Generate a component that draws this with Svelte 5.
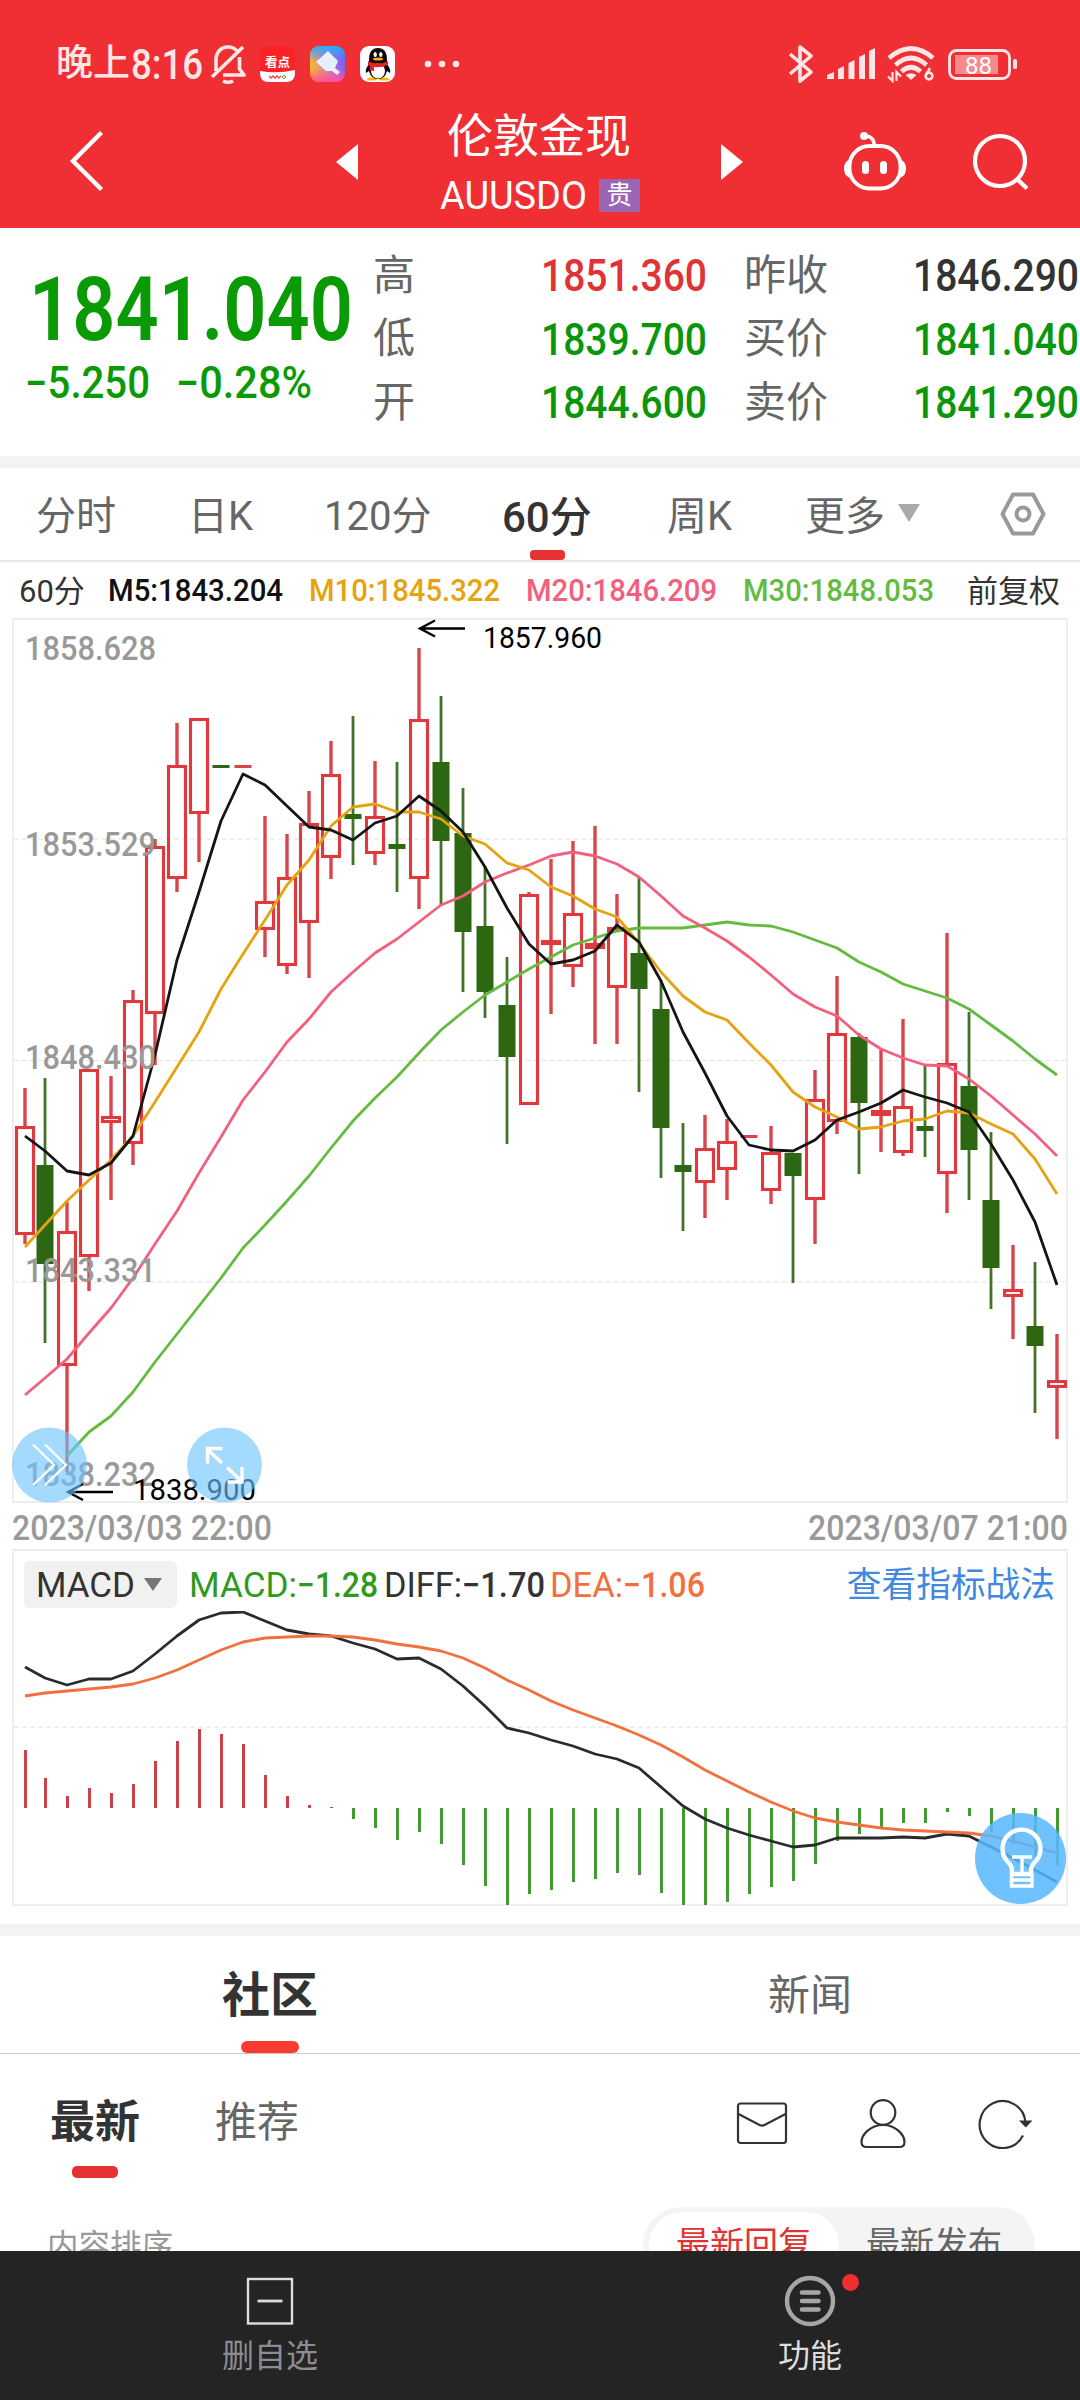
<script lang="ts">
	type Candle = [kind: 'r' | 'g', high: number, top: number, bottom: number, low: number];

	const quotes = [
		{ label: '高', value: '1851.360', tone: 'up', label2: '昨收', value2: '1846.290', tone2: 'flat' },
		{ label: '低', value: '1839.700', tone: 'down', label2: '买价', value2: '1841.040', tone2: 'down' },
		{ label: '开', value: '1844.600', tone: 'down', label2: '卖价', value2: '1841.290', tone2: 'down' }
	];

	const periods = ['分时', '日K', '120分', '60分', '周K'];
	let period = $state('60分');

	const averages = [
		{ text: 'M5:1843.204', width: 175, tone: 'm5' },
		{ text: 'M10:1845.322', width: 191, tone: 'm10' },
		{ text: 'M20:1846.209', width: 191, tone: 'm20' },
		{ text: 'M30:1848.053', width: 191, tone: 'm30' }
	];

	const axis = [
		{ text: '1858.628', y: 660 },
		{ text: '1853.529', y: 856 },
		{ text: '1848.430', y: 1069 },
		{ text: '1843.331', y: 1282 },
		{ text: '1838.232', y: 1486 }
	];

	const candles: Candle[] = [
		['r', 1088, 1126, 1235, 1244], ['g', 1078, 1165, 1264, 1343], ['r', 1202, 1231, 1366, 1472],
		['r', 1069, 1069, 1257, 1291], ['r', 1076, 1116, 1123, 1200], ['r', 990, 1000, 1144, 1165],
		['r', 839, 846, 1014, 1065], ['r', 723, 765, 879, 892], ['r', 718, 718, 814, 862],
		['g', 765, 765, 768, 768], ['r', 765, 765, 768, 768], ['r', 816, 901, 930, 957],
		['r', 834, 877, 966, 974], ['r', 791, 823, 923, 978], ['r', 741, 774, 858, 879],
		['g', 716, 814, 819, 865], ['r', 761, 816, 854, 865], ['g', 762, 844, 849, 892],
		['r', 648, 719, 879, 909], ['g', 696, 762, 841, 905], ['g', 788, 833, 932, 992],
		['g', 866, 926, 992, 1018], ['g', 957, 1005, 1057, 1144], ['r', 892, 894, 1105, 1105],
		['r', 859, 940, 945, 1014], ['r', 841, 913, 967, 987], ['r', 826, 943, 949, 1044],
		['r', 894, 927, 988, 1044], ['g', 877, 953, 989, 1092], ['g', 980, 1009, 1128, 1178],
		['g', 1123, 1165, 1172, 1231], ['r', 1115, 1148, 1183, 1218], ['r', 1119, 1141, 1170, 1200],
		['r', 1135, 1135, 1138, 1138], ['r', 1126, 1152, 1191, 1204], ['g', 1153, 1153, 1176, 1283],
		['r', 1070, 1099, 1200, 1244], ['r', 976, 1033, 1122, 1134], ['g', 1033, 1037, 1103, 1174],
		['r', 1050, 1110, 1116, 1152], ['r', 1019, 1106, 1153, 1156], ['g', 1065, 1126, 1131, 1157],
		['r', 933, 1063, 1174, 1213], ['g', 1012, 1086, 1150, 1200], ['g', 1132, 1200, 1268, 1309],
		['r', 1245, 1289, 1297, 1339], ['g', 1262, 1326, 1346, 1413], ['r', 1334, 1380, 1388, 1439]
	];

	const m5 = [
		1136, 1151, 1171, 1175, 1163, 1136, 1055, 960, 892, 821, 774, 785, 806, 827, 830, 840, 823, 816, 796, 811,
		832, 867, 908, 944, 964, 960, 951, 925, 942, 981, 1032, 1073, 1116, 1145, 1150, 1151, 1140, 1120, 1112, 1103,
		1090, 1097, 1103, 1112, 1144, 1180, 1222, 1285
	];
	const m10 = [
		1247, 1225, 1201, 1180, 1160, 1136, 1102, 1067, 1032, 989, 954, 920, 885, 860, 826, 807, 804, 812, 812, 819,
		836, 844, 863, 870, 887, 896, 909, 917, 943, 972, 996, 1012, 1020, 1043, 1065, 1092, 1107, 1117, 1129, 1127,
		1121, 1119, 1111, 1113, 1124, 1134, 1159, 1194
	];
	const m20 = [
		1395, 1378, 1359, 1333, 1308, 1278, 1244, 1211, 1173, 1137, 1100, 1072, 1042, 1019, 992, 972, 953, 939, 922,
		905, 896, 882, 873, 865, 856, 852, 856, 864, 877, 896, 916, 928, 941, 957, 975, 994, 1007, 1016, 1035, 1049,
		1058, 1065, 1066, 1079, 1096, 1115, 1134, 1156
	];
	const m30 = [
		1456, 1432, 1416, 1392, 1362, 1334, 1306, 1278, 1248, 1225, 1201, 1176, 1148, 1121, 1098, 1077, 1053, 1030,
		1012, 995, 982, 969, 957, 945, 938, 931, 928, 928, 928, 925, 922, 925, 926, 932, 940, 948, 962, 972, 984, 991,
		998, 1009, 1025, 1041, 1059, 1075
	];

	const bars = [
		1750, 1778, 1796, 1788, 1793, 1784, 1761, 1741, 1729, 1734, 1744, 1775, 1796, 1805, 1807, 1819, 1828, 1840,
		1832, 1844, 1865, 1886, 1905, 1894, 1890, 1882, 1879, 1873, 1875, 1893, 1905, 1905, 1902, 1894, 1887, 1881,
		1864, 1841, 1834, 1827, 1823, 1823, 1812, 1816, 1832, 1844, 1857, 1865
	];
	const diff = [
		1667, 1678, 1685, 1679, 1679, 1671, 1654, 1636, 1620, 1613, 1612, 1621, 1630, 1634, 1636, 1643, 1649, 1659,
		1658, 1669, 1686, 1706, 1728, 1733, 1740, 1746, 1754, 1759, 1768, 1787, 1806, 1819, 1828, 1835, 1841, 1847,
		1845, 1838, 1838, 1838, 1837, 1838, 1834, 1836, 1847, 1858, 1870, 1882
	];
	const dea = [
		1696, 1693, 1691, 1689, 1687, 1684, 1678, 1670, 1660, 1650, 1642, 1638, 1637, 1636, 1636, 1637, 1640, 1644,
		1647, 1651, 1658, 1668, 1680, 1690, 1701, 1710, 1718, 1726, 1735, 1745, 1757, 1770, 1781, 1792, 1802, 1811,
		1818, 1822, 1825, 1828, 1830, 1831, 1832, 1833, 1836, 1841, 1847, 1853
	];

	const zero = 1808;

	// the first two slots sit slightly off the 22px rhythm
	const slot = (i: number) => (i === 0 ? 25 : i === 1 ? 45 : 23 + i * 22);
	const line = (ys: number[], from = 0) => ys.map((y, i) => `${slot(i + from)},${y}`).join(' ');
</script>

<!-- condensed figures: cap is the cap height in px -->
{#snippet fig(text: string, width: number, cap: number)}
	<svg class="fig" {width} height={cap} viewBox="0 0 {width} {cap}">
		<text x="0" y={cap} font-size={cap / 0.711} textLength={width} lengthAdjust="spacingAndGlyphs">{text}</text>
	</svg>
{/snippet}

<div class="screen">
	<header>
		<div class="status">
			<div class="status-left">
				<span class="clock">晚上</span>
				<span class="clock-time">{@render fig('8:16', 72, 30)}</span>
				<svg class="bell" width="36" height="40" viewBox="0 0 36 40" fill="none" stroke="#ffe6e6" stroke-width="3.6">
					<path d="M6 27V16C6 8 11 3 18 3c4 0 7 1.500 9 4M29.500 13v12l4.500 6H13M2 33 33 3" stroke-linejoin="round" />
					<path d="M13 37q5 2.500 10 0" />
				</svg>
				<svg class="app" width="35" height="36" viewBox="0 0 35 36">
					<rect width="35" height="36" rx="9" fill="#fa2226" />
					<path d="M0 25q17 3 35-1v3q0 9-9 9H9q-9 0-9-9z" fill="#fff" />
					<text x="5" y="21" font-size="12.500" font-weight="700" fill="#fff">看点</text>
					<path d="M9 30l2 2 2-2 2 2 2-2 2 2 2-2" fill="none" stroke="#e44" stroke-width="1.400" />
					<circle cx="24" cy="31" r="1.500" fill="none" stroke="#693" />
				</svg>
				<svg class="app" width="35" height="36" viewBox="0 0 35 36">
					<defs>
						<linearGradient id="paint" x1="0" y1="0.700" x2="1" y2="0.300">
							<stop offset="0" stop-color="#ffc21c" />
							<stop offset="0.250" stop-color="#e8a06a" />
							<stop offset="0.600" stop-color="#b06fe0" />
							<stop offset="1" stop-color="#6a5cff" />
						</linearGradient>
						<linearGradient id="sky" x1="0" y1="0" x2="0" y2="1">
							<stop offset="0" stop-color="#1db4f5" />
							<stop offset="0.450" stop-color="#4a9df5" stop-opacity="0" />
							<stop offset="0.600" stop-color="#ff4f9a" stop-opacity="0" />
							<stop offset="1" stop-color="#ff4f9a" />
						</linearGradient>
					</defs>
					<rect width="35" height="36" rx="9" fill="url(#paint)" />
					<rect width="35" height="36" rx="9" fill="url(#sky)" />
					<path d="M18 5 28 15l-3 7 5 4-3 3-5-4-6 0L6 16z" fill="#e8f0ff" />
				</svg>
				<svg class="app" width="35" height="36" viewBox="0 0 35 36">
					<rect width="35" height="36" rx="9" fill="#fff" />
					<ellipse cx="12" cy="33" rx="5" ry="1.600" fill="#f7b500" />
					<ellipse cx="24" cy="33" rx="5" ry="1.600" fill="#f7b500" />
					<path d="M9 14Q9 2 18 2t9 12v4q4 5 3 9l-3-2q-2 8-9 8t-9-8l-3 2q-1-4 3-9z" fill="#090909" />
					<ellipse cx="18" cy="25" rx="7" ry="7.500" fill="#fff" />
					<path d="M8 15q10 5 20 0v4q-7 3-14 2v4l-4-.5V20l-2-1z" fill="#e8202a" />
					<ellipse cx="15.200" cy="8.500" rx="1.700" ry="2.500" fill="#fff" />
					<ellipse cx="20.800" cy="8.500" rx="1.700" ry="2.500" fill="#fff" />
					<ellipse cx="18" cy="13" rx="5" ry="1.500" fill="#f7b500" />
				</svg>
				<svg class="dots" width="36" height="8" viewBox="0 0 36 8" fill="#ffe6e6">
					<circle cx="4" cy="4" r="3.300" /><circle cx="18" cy="4" r="3.300" /><circle cx="32" cy="4" r="3.300" />
				</svg>
			</div>
			<div class="status-right">
				<svg width="26" height="40" viewBox="0 0 26 40" fill="none" stroke="#ffe6e6" stroke-width="3.600" stroke-linejoin="round">
					<path d="M2 10l21 18-11 9V3l11 9L2 30" />
				</svg>
				<svg class="signal" width="48" height="32" viewBox="0 0 48 32" fill="#ffe6e6">
					<path d="M0 31v-4l7-3v7zM11 31V21l6-3v13zM21.500 31V15l6-3v19zM32 31V9l6-3v25zM42 31V3l6-3v31z" />
				</svg>
				<svg class="wifi" width="48" height="38" viewBox="0 0 48 38" fill="none" stroke="#ffe6e6" stroke-width="4.6">
					<path d="M2 13Q24-6 46 13M8.500 20Q24 6 39.500 20M14.500 26.500q9.500-8.500 19 0" />
					<path d="M18.500 30q5.500-3.500 11 0L24 35z" fill="#ffe6e6" stroke="none" />
					<path d="M5.500 27v9L1 31.500M9.500 36v-9l4.500 4.500" stroke-width="2.200" />
					<circle cx="42" cy="31" r="3.400" stroke-width="2.600" />
					<path d="M39 30l4-7" stroke-width="2.600" />
				</svg>
				<svg class="battery" width="70" height="31" viewBox="0 0 70 31">
					<rect x="1.500" y="1.500" width="60" height="28" rx="7" fill="none" stroke="#ffe6e6" stroke-width="2.800" />
					<rect x="7" y="6" width="43" height="19" fill="#f68a8c" />
					<rect x="65" y="10" width="4" height="10" rx="1.500" fill="#ffe6e6" />
					<text x="17" y="24.500" font-size="24" textLength="27" lengthAdjust="spacingAndGlyphs" fill="#fff">88</text>
				</svg>
			</div>
		</div>

		<div class="nav">
			<svg class="back" width="36" height="62" viewBox="0 0 36 62" fill="none" stroke="#fff" stroke-width="4.400">
				<path d="M32.500 2.500 4 31l28.500 28.500" />
			</svg>
			<svg class="prev" width="22" height="36" viewBox="0 0 22 36" fill="#fff"><path d="M22 0v36L0 18z" /></svg>
			<div class="title">
				<div class="name">伦敦金现</div>
				<div class="code">
					{@render fig('AUUSDO', 147, 28)}
					<span class="badge">贵</span>
				</div>
			</div>
			<svg class="next" width="22" height="36" viewBox="0 0 22 36" fill="#fff"><path d="M0 0v36l22-18z" /></svg>
			<svg class="robot" width="64" height="62" viewBox="0 0 64 62" fill="none" stroke="#fff" stroke-width="3.800">
				<rect x="6.500" y="16" width="51" height="42.500" rx="20" />
				<path d="M5.500 31q-3.500 2-3.500 7.500t3.500 7.500zM58.500 31q3.500 2 3.500 7.500t-3.500 7.500z" fill="#fff" stroke-width="2" />
				<path d="M22 6q9 0 9.500 10" stroke-width="3.400" />
				<circle cx="21" cy="6" r="4" fill="#fff" stroke="none" />
				<path d="M22.500 34.500v6M40.500 34.500v6" stroke-width="7" stroke-linecap="round" />
			</svg>
			<svg class="search" width="58" height="58" viewBox="0 0 58 58" fill="none" stroke="#fff" stroke-width="4.200">
				<circle cx="28" cy="28" r="25" />
				<path d="M44.500 45.500 55 55.500" />
			</svg>
		</div>
	</header>

	<section class="quote">
		<div class="last">
			<div class="price">{@render fig('1841.040', 324, 63)}</div>
			<div class="change">
				{@render fig('−5.250', 125, 31)}
				{@render fig('−0.28%', 136, 31)}
			</div>
		</div>
		<div class="rows">
			{#each quotes as q}
				<span class="label">{q.label}</span>
				<span class={q.tone}>{@render fig(q.value, 166, 31)}</span>
				<span class="label">{q.label2}</span>
				<span class={q.tone2}>{@render fig(q.value2, 166, 31)}</span>
			{/each}
		</div>
	</section>

	<div class="periods">
		{#each periods as p}
			<button class:active={period === p} onclick={() => (period = p)}>{p}</button>
		{/each}
		<button class="more">
			更多
			<svg width="22" height="18" viewBox="0 0 22 18" fill="#aaa"><path d="M0 0h22L11 18z" /></svg>
		</button>
		<svg class="gear" width="46" height="44" viewBox="0 0 46 44" fill="none" stroke="#999" stroke-width="4">
			<path d="M13 2.500h20L43.500 22 33 41.500H13L2.500 22z" stroke-linejoin="round" />
			<circle cx="23" cy="22" r="6.500" />
		</svg>
	</div>

	<div class="averages">
		<span class="range">60分</span>
		{#each averages as a}
			<span class={a.tone}>{@render fig(a.text, a.width, 22)}</span>
		{/each}
		<span class="adjust">前复权</span>
	</div>

	<div class="chart">
		<svg width="1080" height="885" viewBox="0 618 1080 885">
			<rect x="13" y="619" width="1054" height="883" fill="none" stroke="#eee" stroke-width="2" />
			{#each [839, 1060.5, 1282] as y}
				<line x1="14" x2="1066" y1={y} y2={y} stroke="#e2e2e2" stroke-dasharray="5 3" />
			{/each}
			{#each candles as [kind, high, top, bottom, low], i}
				{@const x = slot(i)}
				{#if bottom - top <= 3}
					<rect x={x - 8.5} y={top} width="17" height="3" fill={kind === 'r' ? '#d8454b' : '#2d6712'} />
				{:else if kind === 'r'}
					<path d="M{x} {high}V{top}M{x} {bottom}V{low}" stroke="#d8454b" stroke-width="3.4" />
					<rect x={x - 8.5} y={top + 1.5} width="17" height={Math.max(bottom - top - 3, 1)} fill="none" stroke="#e0383c" stroke-width="3.1" />
				{:else}
					<path d="M{x} {high}V{low}" stroke="#41742a" stroke-width="2.800" />
					<rect x={x - 8.5} y={top} width="17" height={bottom - top} fill="#2d6712" />
				{/if}
			{/each}
			<g class="curves">
				<polyline points={line(m30, 2)} stroke="#63bb3f" />
				<polyline points={line(m20)} stroke="#f2607d" />
				<polyline points={line(m10)} stroke="#e5a310" />
				<polyline points={line(m5)} stroke="#151515" />
			</g>
			{#each axis as a}
				<text class="tick" x="25" y={a.y} font-size="33" textLength="131" lengthAdjust="spacingAndGlyphs">{a.text}</text>
			{/each}
			<path d="M465 628.500H420M435 620.500l-15 8 15 8M113 1492H68M83 1484l-15 8 15 8" fill="none" stroke="#000" stroke-width="2.400" />
			<text x="483" y="648" font-size="30" textLength="119" lengthAdjust="spacingAndGlyphs">1857.960</text>
			<text x="133" y="1500" font-size="30" textLength="123" lengthAdjust="spacingAndGlyphs">1838.900</text>
			<g fill="#6dc4ff" fill-opacity="0.620">
				<circle cx="49.500" cy="1465" r="37.500" />
				<circle cx="224.500" cy="1465" r="37.500" />
			</g>
			<g fill="none" stroke="#fff">
				<path d="M33 1444.500l21 20.500-21 20M45 1444.500l21 20.500-21 20" stroke-width="2.200" />
				<path d="M222 1463l-14-13M207.500 1463.500v-15h15M227 1467.500l14 13M227.500 1482h14.500v-15" stroke-width="3.400" />
			</g>
		</svg>
	</div>

	<div class="dates">
		{@render fig('2023/03/03 22:00', 260, 25)}
		{@render fig('2023/03/07 21:00', 260, 25)}
	</div>

	<div class="macd">
		<div class="macd-head">
			<button class="chip">
				{@render fig('MACD', 99, 25)}
				<svg width="18" height="13" viewBox="0 0 18 13" fill="#777"><path d="M0 0h18L9 13z" /></svg>
			</button>
			<span class="macd-val">{@render fig('MACD:', 108, 25)}<b>{@render fig('−1.28', 81, 25)}</b></span>
			<span class="diff-val">{@render fig('DIFF:', 78, 25)}<b>{@render fig('−1.70', 83, 25)}</b></span>
			<span class="dea-val">{@render fig('DEA:', 73, 25)}<b>{@render fig('−1.06', 82, 25)}</b></span>
			<a href="#tactics">查看指标战法</a>
		</div>
		<svg width="1054" height="295" viewBox="13 1611 1054 295">
			<line x1="14" x2="1066" y1="1727" y2="1727" stroke="#ddd" stroke-dasharray="5 3" />
			{#each bars as y, i}
				<line x1={slot(i) + 0.5} x2={slot(i) + 0.5} y1={zero} y2={y} stroke={y < zero ? '#cd4049' : '#429a33'} stroke-width="3" />
			{/each}
			<polyline points={line(diff)} stroke="#2b2b2b" />
			<polyline points={line(dea)} stroke="#f2703c" />
		</svg>
		<button class="hint" aria-label="提示">
			<svg width="92" height="92" viewBox="0 0 92 92" fill="none" stroke="#fff" stroke-width="4.400">
				<path d="M37 61V57q0-4-4-8a19 19 0 1 1 27 0q-4 4-4 8v4z" stroke-linejoin="round" />
				<path d="M36.500 61v12h20.500V61M36.500 67h20.500M37 44h20M47 44v16" stroke-width="3.400" />
			</svg>
		</button>
	</div>

	<div class="tabs">
		<div class="tab active">社区</div>
		<div class="tab">新闻</div>
	</div>

	<div class="feed">
		<div class="feed-head">
			<div class="feed-tab active">最新</div>
			<div class="feed-tab">推荐</div>
			<div class="actions">
				<svg width="52" height="50" viewBox="0 0 52 50" fill="none" stroke="#333" stroke-width="2.200">
					<rect x="2" y="4.500" width="48" height="39.500" rx="2.500" />
					<path d="M2.500 15l21 11q2.500 1.200 5 0l21-11" />
				</svg>
				<svg width="46" height="50" viewBox="0 0 46 50" fill="none" stroke="#333" stroke-width="2.200">
					<ellipse cx="23" cy="13.500" rx="12.300" ry="12.300" />
					<path d="M23 26C10 26 1.500 36 1.500 43q0 5 5 5h33q5 0 5-5C44.500 36 36 26 23 26z" />
				</svg>
				<svg width="54" height="50" viewBox="0 0 54 50" fill="none" stroke="#333" stroke-width="2.200">
					<path d="M45 36.500A23 23.500 0 1 1 47.500 23" />
					<path d="M43.500 22.500h8.500l-4.250 4.500z" fill="#333" />
				</svg>
			</div>
		</div>
		<div class="sort">
			<span class="sort-label">内容排序</span>
			<div class="switch">
				<span class="option on">最新回复</span>
				<span class="option">最新发布</span>
			</div>
		</div>
	</div>

	<footer>
		<div class="item">
			<svg width="50" height="52" viewBox="0 0 50 52" fill="none" stroke="#ddd" stroke-width="2.400">
				<rect x="3" y="4" width="44" height="44.500" />
				<path d="M12.500 26h25" stroke-width="2.800" />
			</svg>
			<span>删自选</span>
		</div>
		<div class="item bright">
			<div class="icon">
				<svg width="52" height="52" viewBox="0 0 52 52" fill="none" stroke="#a6a6a6">
					<circle cx="26" cy="26" r="23" stroke-width="4.400" />
					<path d="M18 17.500h16.500M18 26h16.500M18 34.500h16.500" stroke-width="4.600" stroke-linecap="round" />
				</svg>
				<i class="dot"></i>
			</div>
			<span>功能</span>
		</div>
	</footer>
</div>

<style>
	:global(body) {
		background: #fff;
	}

	.screen {
		width: 1080px;
		height: 2400px;
		display: flex;
		flex-direction: column;
		overflow: hidden;
		background: #fff;
		color: #333;
		font-family: Roboto, "Noto Sans CJK SC", sans-serif;
	}

	.screen :global(*) {
		box-sizing: border-box;
	}

	svg {
		display: block;
		flex-shrink: 0;
	}

	.fig {
		overflow: visible;
		fill: currentColor;
	}

	button {
		border: 0;
		padding: 0;
		background: none;
		color: inherit;
		font: inherit;
	}

	header {
		height: 228px;
		flex-shrink: 0;
		background: #f02f35;
		color: #fff;
	}

	.status {
		height: 104px;
		padding: 24px 62px 0 56px;
		display: flex;
		align-items: center;
		justify-content: space-between;
	}

	.status-left,
	.status-right {
		display: flex;
		align-items: center;
	}

	.clock {
		font-size: 37px;
		line-height: 40px;
		font-weight: 500;
		color: #ffe6e6;
	}

	.clock-time {
		margin-left: 1px;
		color: #ffe6e6;
		font-weight: 500;
	}

	.bell {
		margin: 0 14px 0 7px;
	}

	.app {
		margin-right: 15px;
	}

	.dots {
		margin-left: 14px;
	}

	.signal {
		margin: 0 12px 0 13px;
	}

	.battery {
		margin-left: 13px;
	}

	.nav {
		height: 124px;
		display: flex;
		align-items: center;
		padding: 0 50px 10px 69px;
	}

	.back {
		margin-top: 0;
	}

	.prev {
		margin: 2px 82px 0 231px;
	}

	.title {
		width: 200px;
		display: flex;
		flex-direction: column;
		margin-top: -3px;
	}

	.name {
		font-size: 46px;
		line-height: 56px;
		margin-left: 7px;
		white-space: nowrap;
	}

	.code {
		display: flex;
		align-items: center;
		gap: 12px;
		margin-top: 15px;
	}

	.badge {
		width: 41px;
		height: 33px;
		background: #9a66b4;
		font-size: 26px;
		line-height: 32px;
		text-align: center;
	}

	.next {
		margin: 2px 0 0 81px;
	}

	.robot {
		margin: 0 0 0 100px;
	}

	.search {
		margin: 1px 0 0 65px;
	}

	.quote {
		height: 240px;
		flex-shrink: 0;
		display: flex;
		border-bottom: 12px solid #f3f3f3;
		font-weight: 500;
	}

	.last {
		width: 373px;
		padding: 49px 0 0 25px;
		color: #0a9a05;
	}

	.price {
		padding-left: 4px;
		font-weight: 600;
	}

	.change {
		display: flex;
		gap: 26px;
		margin-top: 27px;
	}

	.rows {
		display: grid;
		grid-template-columns: 168px 203px 169px 167px;
		grid-auto-rows: 63.5px;
		align-items: center;
		padding-top: 16px;
	}

	.label {
		font-size: 42px;
		line-height: 50px;
		font-weight: 400;
		color: #666;
		white-space: nowrap;
	}

	.up {
		color: #e03335;
	}

	.down {
		color: #0a960a;
	}

	.flat {
		color: #333;
	}

	.periods {
		height: 94px;
		flex-shrink: 0;
		display: grid;
		grid-template-columns: 152px 136px 178px 165px 138px 195px 46px;
		align-items: stretch;
		padding-left: 36px;
		border-bottom: 2px solid #e8e8e8;
		font-size: 40px;
		color: #666;
	}

	.periods button {
		display: flex;
		align-items: center;
		justify-self: start;
		position: relative;
		padding-bottom: 2px;
		white-space: nowrap;
	}

	.periods .active {
		color: #333;
		font-size: 42px;
		font-weight: 500;
	}

	.periods .active::after {
		content: "";
		position: absolute;
		left: 50%;
		bottom: 0;
		width: 35px;
		height: 10px;
		margin-left: -17px;
		border-radius: 4px;
		background: #e63233;
	}

	.periods .more {
		gap: 13px;
	}

	.gear {
		align-self: center;
	}

	.averages {
		height: 56px;
		flex-shrink: 0;
		display: flex;
		align-items: center;
		padding-left: 19px;
		font-size: 31px;
	}

	.averages span {
		margin-right: 26px;
	}

	.averages .range {
		width: 65px;
		margin: -3px 24px 0 0;
		white-space: nowrap;
	}

	.averages .adjust {
		margin: -3px 0 0 7px;
	}

	.m5,
	.m10,
	.m20,
	.m30 {
		font-weight: 500;
	}

	.m5 {
		color: #111;
	}

	.m10 {
		color: #e5a310;
	}

	.m20 {
		color: #f2607d;
	}

	.m30 {
		color: #63bb3f;
	}

	.chart {
		height: 885px;
		flex-shrink: 0;
	}

	.curves polyline,
	.macd polyline {
		fill: none;
		stroke-width: 2.8;
		stroke-linejoin: round;
	}

	.tick {
		fill: #999;
		font-weight: 500;
	}

	.dates {
		height: 46px;
		flex-shrink: 0;
		display: flex;
		justify-content: space-between;
		padding: 12px 12px 0 12px;
		color: #999;
		font-weight: 500;
	}

	.macd {
		position: relative;
		height: 357px;
		flex-shrink: 0;
		margin: 0 12px;
		border: 2px solid #eee;
	}

	.macd-head {
		display: flex;
		align-items: center;
		height: 60px;
		padding: 7px 11px 0 10px;
		font-size: 34.7px;
	}

	.macd-head span {
		display: flex;
	}

	.macd-head b {
		font-weight: 500;
	}

	.chip {
		display: flex;
		align-items: center;
		gap: 9px;
		width: 153px;
		height: 47px;
		padding-left: 12px;
		margin-right: 12px;
		border-radius: 6px;
		background: #f1f1f1;
	}

	.macd-val {
		color: #2f9a1c;
		margin-right: 6px;
	}

	.diff-val {
		margin-right: 5px;
	}

	.dea-val {
		color: #f2703c;
	}

	.macd-head a {
		margin-left: auto;
		color: #4089e0;
		text-decoration: none;
		line-height: 48px;
	}

	.macd > svg {
		margin-left: -1px;
	}

	.hint {
		position: absolute;
		right: 0;
		bottom: 0;
		width: 91px;
		height: 91px;
		border-radius: 50%;
		background: rgba(88, 184, 254, 0.86);
	}

	.tabs {
		height: 130px;
		flex-shrink: 0;
		margin-top: 18px;
		display: grid;
		grid-template-columns: 1fr 1fr;
		border-top: 12px solid #f3f3f3;
		border-bottom: 1px solid #c8c8c8;
	}

	.tab {
		display: flex;
		justify-content: center;
		position: relative;
		font-size: 42px;
		line-height: 119px;
		height: 117px;
		color: #666;
	}

	.tab.active {
		font-size: 48px;
		font-weight: 700;
		color: #333;
	}

	.tab.active::after,
	.feed-tab.active::after {
		content: "";
		position: absolute;
		left: 50%;
		bottom: 0;
		width: 58px;
		height: 12px;
		margin-left: -29px;
		border-radius: 6px;
		background: #fb3a30;
	}

	.feed {
		flex: 1;
		min-height: 0;
		overflow: hidden;
	}

	.feed-head {
		display: flex;
		height: 124px;
		padding: 0 48px 0 50px;
		line-height: 137px;
	}

	.feed-tab {
		position: relative;
		margin-right: 75px;
		font-size: 42px;
		color: #666;
	}

	.feed-tab.active {
		font-size: 45px;
		font-weight: 700;
		color: #333;
	}

	.feed-tab.active::after {
		width: 46px;
		margin-left: -23px;
		border-radius: 5px;
		background: #e63233;
	}

	.actions {
		display: flex;
		margin: 45px 0 0 auto;
	}

	.actions svg:nth-child(2) {
		margin: 0 72px;
	}

	.sort {
		display: flex;
		align-items: center;
		justify-content: space-between;
		height: 76px;
		margin-top: 29px;
		padding: 0 45px 0 47px;
	}

	.sort-label {
		margin-top: -5px;
		font-size: 31.5px;
		color: #999;
	}

	.switch {
		display: flex;
		width: 392px;
		height: 76px;
		padding: 5px 6px;
		border-radius: 38px;
		background: #f4f4f4;
	}

	.option {
		width: 190px;
		border-radius: 33px;
		text-align: center;
		font-size: 34px;
		line-height: 64px;
		color: #666;
	}

	.option.on {
		background: #fff;
		color: #e03335;
	}

	footer {
		height: 149px;
		flex-shrink: 0;
		display: grid;
		grid-template-columns: 1fr 1fr;
		background: #242424;
	}

	.item {
		display: flex;
		flex-direction: column;
		align-items: center;
		padding-top: 24px;
		font-size: 32px;
		line-height: 46px;
		color: #8e8c93;
	}

	.item span {
		margin-top: 6px;
	}

	.bright {
		color: #ddd;
	}

	.icon {
		position: relative;
	}

	.dot {
		position: absolute;
		right: -23px;
		top: -1px;
		width: 17px;
		height: 17px;
		border-radius: 50%;
		background: #f22d30;
	}
</style>
